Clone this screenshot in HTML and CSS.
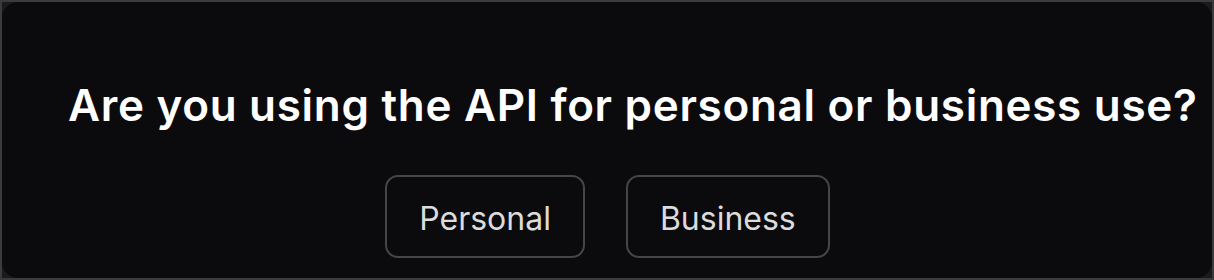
FILE: index.html
```html
<!DOCTYPE html>
<html>
<head>
<meta charset="utf-8">
<link rel="stylesheet" href="styles.css">
</head>
<body>
<div class="frame">
  <div class="panel">
    <h1 class="title">Are you using the API for personal or business use?</h1>
    <div class="choices">
      <button class="choice">Personal</button>
      <button class="choice">Business</button>
    </div>
  </div>
</div>
</body>
</html>
```
FILE: styles.css
```css
html, body {
  margin: 0;
  padding: 0;
  height: 100%;
}
body {
  background: #3b3b3d;
  font-family: Inter, "Noto Sans", sans-serif;
}
.frame {
  box-sizing: border-box;
  height: 280px;
  background: #1a1a1c;
  border: 2px solid #3b3b3d;
}
.panel {
  height: 100%;
  background: #0b0b0d;
  border-radius: 16px;
  display: flex;
  flex-direction: column;
  overflow: hidden;
}
.title {
  margin: 0;
  padding: 78px 0 0 66px;
  font-size: 44px;
  font-weight: 600;
  color: #ffffff;
  line-height: 50px;
  white-space: nowrap;
  letter-spacing: 0.7px;
}
.choices {
  display: flex;
  justify-content: center;
  gap: 41px;
  margin-top: 45px;
  padding-left: 1px;
}
.choice {
  box-sizing: border-box;
  height: 83px;
  padding: 4px 32px 0;
  background: transparent;
  border: 2px solid #45454a;
  border-radius: 13px;
  color: #dcdcdc;
  font-family: Inter, "Noto Sans", sans-serif;
  font-size: 32px;
  font-weight: 400;
  line-height: 1;
}
```
